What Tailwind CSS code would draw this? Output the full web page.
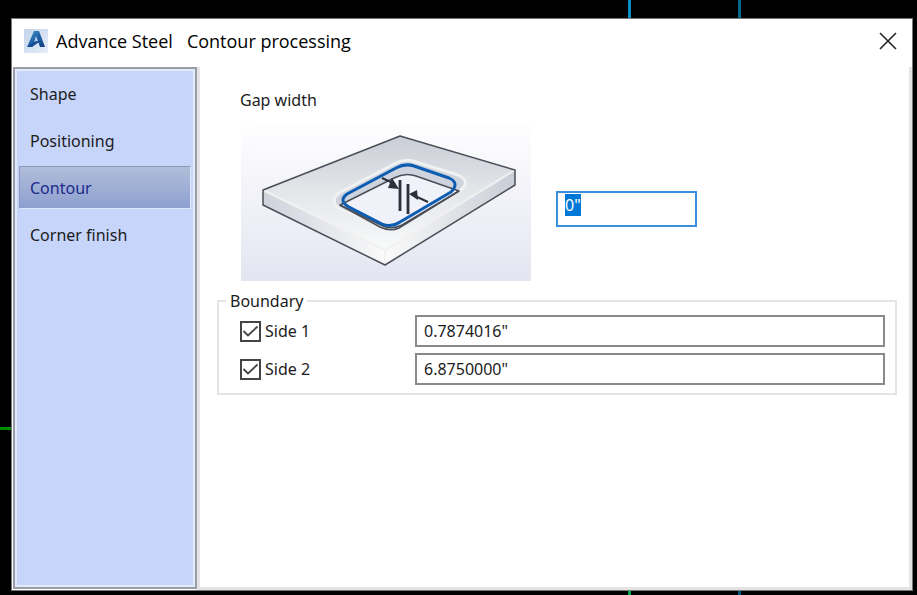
<!DOCTYPE html>
<html lang="en">
<head>
  <meta charset="UTF-8">
  <meta name="viewport" content="width=device-width, initial-scale=1.0">
  <title>Advance Steel Contour processing</title>
  <script src="https://cdn.jsdelivr.net/npm/@tailwindcss/browser@4"></script>
</head>
<body class="relative flex min-h-screen flex-col bg-black pt-[18px] pr-1 pb-1 pl-[11px] font-['Noto_Sans',sans-serif] text-base text-[#1c1c1c]">
  <!-- Drawing lines behind the dialog -->
  <div class="absolute top-0 left-[628px] h-[18px] w-[3px] bg-[#0d8fc4]"></div>
  <div class="absolute top-0 left-[738px] h-[18px] w-[3px] bg-[#04678c]"></div>
  <div class="absolute bottom-0 left-[628px] h-1 w-[3px] bg-[#00a84a]"></div>
  <div class="absolute bottom-0 left-[738px] h-1 w-[3px] bg-[#04567c]"></div>
  <div class="absolute top-[427px] left-0 h-[3px] w-[11px] bg-[#008c00]"></div>

  <!-- Dialog -->
  <main class="relative flex flex-1 flex-col border border-[#777] bg-white">
    <!-- Title bar -->
    <header class="flex h-12 items-center px-3 pb-1">
      <svg class="mr-2 h-6 w-6" viewBox="0 0 24 24" aria-hidden="true">
        <defs>
          <linearGradient id="tile" x1="0" y1="0" x2="1" y2="1">
            <stop offset="0" stop-color="#c3d3ea"/>
            <stop offset="1" stop-color="#e6eef8"/>
          </linearGradient>
          <linearGradient id="letter" x1="0" y1="0" x2="1" y2="1">
            <stop offset="0" stop-color="#4b9ad0"/>
            <stop offset=".5" stop-color="#1d60a8"/>
            <stop offset="1" stop-color="#103c7c"/>
          </linearGradient>
        </defs>
        <rect width="24" height="24" fill="url(#tile)"/>
        <path d="M3 18 10 2h5l6 16h-5l-1.500-4.500L8 18Z" fill="url(#letter)"/>
        <path d="m12 7 2 5-4 1.500Z" fill="#b9d0ea"/>
        <path d="M3 18c3-1.500 7-6 10-6L15 13.500c-3 0-4 1.500-7 4.500Z" fill="#174d94"/>
      </svg>
      <h1 class="flex gap-[14px] font-['Open_Sans',sans-serif] text-lg text-black"><span>Advance Steel</span><span>Contour processing</span></h1>
      <button type="button" aria-label="Close" class="ml-auto flex h-6 w-6 items-center justify-center">
        <svg class="h-[18px] w-[18px]" viewBox="0 0 18 18" fill="none" stroke="#222" stroke-width="1.600"><path d="m1 1 16 16M17 1 1 17"/></svg>
      </button>
    </header>

    <div class="flex flex-1 pl-px">
      <!-- Pages -->
      <nav class="mb-px flex w-[184px] shrink-0 flex-col border-2 border-[#9a9da8] bg-[#c7d5fb] py-[3px] pr-1 pl-1 inset-ring-2 inset-ring-[#e3eafc]">
        <div class="flex flex-col gap-1">
          <button type="button" class="h-[43px] pl-[11px] text-left">Shape</button>
          <button type="button" class="h-[43px] pl-[11px] text-left">Positioning</button>
          <button type="button" aria-current="page" class="h-[43px] border border-t-[#8c98bb] border-r-[#dfe7fc] border-b-[#dfe7fc] border-l-[#8c98bb] bg-linear-to-b from-[#b1bed9] to-[#8d9fd0] pl-[10px] text-left text-[#1c2b8c]">Contour</button>
          <button type="button" class="h-[43px] pl-[11px] text-left">Corner finish</button>
        </div>
      </nav>

      <!-- Page content -->
      <section class="flex-1 border-r-[3px] border-b-[3px] border-l-[3px] border-[#e4e4e4] pt-[21px] pr-3 pl-[17px]">
        <div class="pl-[23px]">
          <label for="gap" class="block leading-6">Gap width</label>
          <div class="mt-[13px] flex items-center pl-px">
            <svg class="h-[156px] w-[290px]" viewBox="0 0 290 156" role="img" aria-label="Plate with contour gap">
              <defs>
                <linearGradient id="backdrop" x1="0" y1="0" x2="0" y2="1">
                  <stop offset="0" stop-color="#fefeff"/>
                  <stop offset="1" stop-color="#e4e5f1"/>
                </linearGradient>
                <linearGradient id="plate" x1="0" y1="0" x2="0" y2="1">
                  <stop offset="0" stop-color="#c9cdd6"/>
                  <stop offset=".45" stop-color="#e2e4e8"/>
                  <stop offset="1" stop-color="#f9fafa"/>
                </linearGradient>
                <linearGradient id="edgeLeft" x1="0" y1="0" x2="1" y2="0">
                  <stop offset="0" stop-color="#ced2db"/>
                  <stop offset="1" stop-color="#fafafa"/>
                </linearGradient>
                <linearGradient id="edgeRight" x1="0" y1="0" x2="1" y2="0">
                  <stop offset="0" stop-color="#fafafa"/>
                  <stop offset="1" stop-color="#c9cdd6"/>
                </linearGradient>
              </defs>
              <rect width="290" height="156" fill="url(#backdrop)"/>
              <path d="M22 65 159 11l115 34-130 80Z" fill="url(#plate)"/>
              <path d="m22 65 122 60v15L22 80Z" fill="url(#edgeLeft)"/>
              <path d="m144 125 130-80v15l-130 80Z" fill="url(#edgeRight)"/>
              <path d="m22 65 122 60 130-80M144 125v15" fill="none" stroke="#f1f1f1" stroke-width="2"/>
              <path d="M22 65 159 11l115 34v15l-130 80L22 80Z" fill="none" stroke="#4a4e57" stroke-width="1.500" stroke-linejoin="round"/>
              <!-- Opening -->
              <path d="M98 68 155 38q10-5 20-1l42 13q13 6 3 15l-58 36q-12 6-23 1L101 85q-14-8-3-17Z" fill="#cfd3de" stroke="#f0f1f1" stroke-width="3"/>
              <path d="M99 80 153 53q11-6 22-2l43 15-57 34q-10 5-19 1Z" fill="#f1f1f9" stroke="#4a4e57" stroke-width="1.500" stroke-linejoin="round"/>
              <path d="m99 80 40 22q10 5 19 1l60-37" fill="none" stroke="#4a4e57" stroke-width="1.500"/>
              <path d="m106 69 49-26q9-5 18-2l35 12q11 5 2 14l-51 30q-9 6-18 2l-33-17q-11-6-2-13Z" fill="none" stroke="#0c5cb2" stroke-width="3" stroke-linejoin="round"/>
              <!-- Gap arrows -->
              <path d="M159 55v31M167 59v30" stroke="#2b313b" stroke-width="2.800"/>
              <path d="m141 53 13 6M187 77l-13-6" stroke="#2b313b" stroke-width="2"/>
              <path d="m158 64-11-1 4-10ZM168 69l8-4 1 10Z" fill="#2b313b"/>
            </svg>
            <input id="gap" type="text" value="0&quot;" autofocus class="ml-[25px] mt-[11px] h-9 w-[141px] border-2 border-[#3a8fdb] bg-white pb-2 pl-[7px] leading-5 outline-none selection:bg-[#0078d7] selection:text-white">
          </div>
        </div>

        <!-- Boundary -->
        <fieldset class="mt-2 border-2 border-[#e4e4e4] pt-[2px] pr-[10px] pb-2 pl-[21px]">
          <legend class="-ml-[14px] px-1 leading-6">Boundary</legend>
          <div class="flex flex-col gap-[6px]">
            <div class="flex items-center">
              <label for="side1" class="flex w-[175px] items-center gap-1">
                <span class="relative h-[21px] w-[21px]">
                  <input id="side1" type="checkbox" checked class="block h-[21px] w-[21px] appearance-none border-2 border-[#444] bg-white">
                  <svg class="pointer-events-none absolute inset-0" viewBox="0 0 21 21" fill="none" stroke="#444" stroke-width="1.800"><path d="m3.500 10 4.500 4.500L17.500 5.500"/></svg>
                </span>
                Side 1
              </label>
              <input type="text" aria-label="Side 1 value" value="0.7874016&quot;" class="h-8 min-w-0 flex-1 border-2 border-[#8a8a8a] bg-white pl-[7px] outline-none">
            </div>
            <div class="flex items-center">
              <label for="side2" class="flex w-[175px] items-center gap-1">
                <span class="relative h-[21px] w-[21px]">
                  <input id="side2" type="checkbox" checked class="block h-[21px] w-[21px] appearance-none border-2 border-[#444] bg-white">
                  <svg class="pointer-events-none absolute inset-0" viewBox="0 0 21 21" fill="none" stroke="#444" stroke-width="1.800"><path d="m3.500 10 4.500 4.500L17.500 5.500"/></svg>
                </span>
                Side 2
              </label>
              <input type="text" aria-label="Side 2 value" value="6.8750000&quot;" class="h-8 min-w-0 flex-1 border-2 border-[#8a8a8a] bg-white pl-[7px] outline-none">
            </div>
          </div>
        </fieldset>
      </section>
    </div>
  </main>

  <script>
    const gap = document.getElementById('gap');
    gap.focus();
    gap.select();
  </script>
</body>
</html>
